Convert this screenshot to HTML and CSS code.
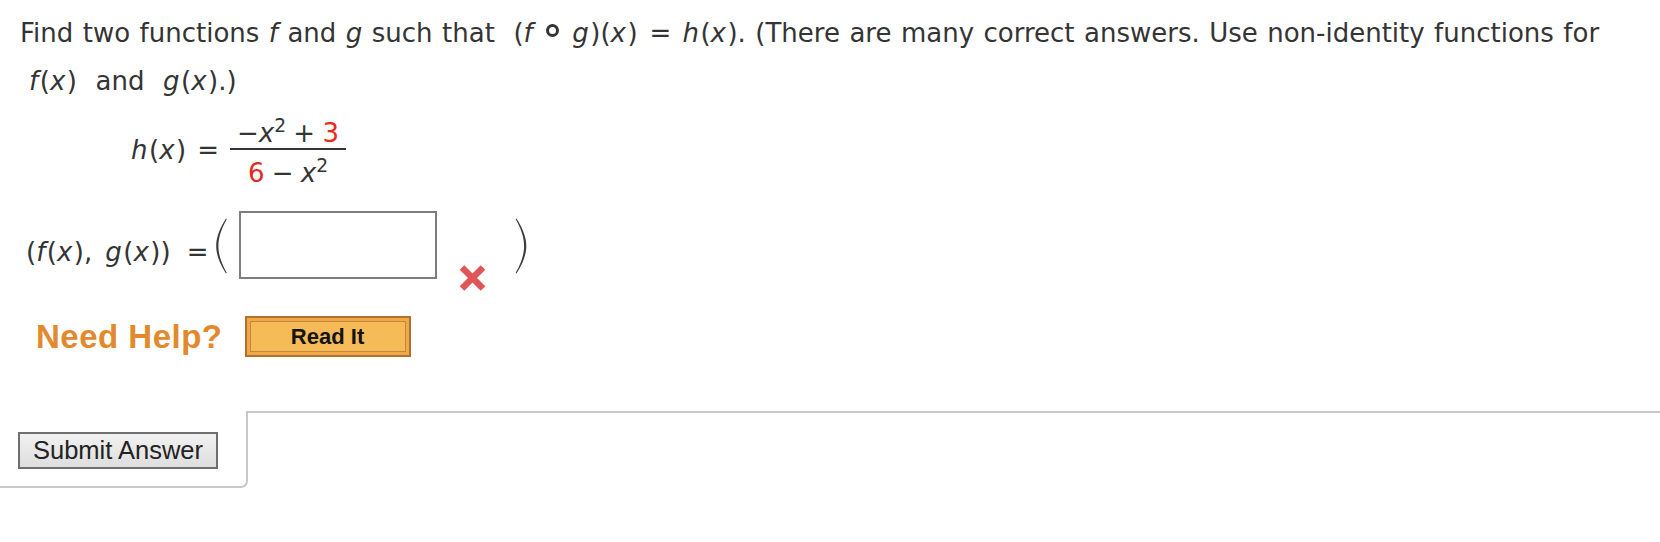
FILE: index.html
```html
<!DOCTYPE html>
<html>
<head>
<meta charset="utf-8">
<link rel="stylesheet" href="styles.css">
</head>
<body>
<div class="page">
  <p class="question">Find two functions <i>f</i> and <i>g</i> such that <span class="m">(<i>f</i><span class="ring" role="img" aria-label="∘"></span><i>g</i>)(<i>x</i>)<span class="op">=</span><i>h</i>(<i>x</i>)</span>. (There are many correct answers. Use non-identity functions for <span class="m pr"><i>f</i>(<i>x</i>)</span> and <span class="m"><i>g</i>(<i>x</i>)</span>.)</p>

  <div class="eq-row">
    <span class="eq-label"><i>h</i>(<i>x</i>)<span class="op">=</span></span>
    <span class="frac">
      <span class="num">−<i>x</i><sup>2</sup><span class="bin">+</span><span class="red">3</span></span>
      <span class="den"><span class="red">6</span><span class="bin">−</span><i>x</i><sup>2</sup></span>
    </span>
  </div>

  <div class="ans-row">
    <span class="ans-label">(<i>f</i>(<i>x</i>),<span class="thin"></span><i>g</i>(<i>x</i>))<span class="op">=</span></span>
    <svg class="paren paren-l" viewBox="0 0 12 56" width="12" height="56"><path d="M11 0.5 C3.5 12 1.2 21 1.2 28 C1.2 35 3.5 44 11 55.5 L11.8 54.8 C5.5 44 3.4 35 3.4 28 C3.4 21 5.5 12 11.8 1.2 Z"/></svg>
    <input class="answer-box" type="text" aria-label="answer">
    <svg class="wrong" viewBox="0 0 27 26" width="27" height="26"><path d="M3 2.5 L24 23.5 M24 2.5 L3 23.5"/></svg>
    <svg class="paren paren-r" viewBox="0 0 12 56" width="13" height="56"><path d="M1 0.5 C8.5 12 10.8 21 10.8 28 C10.8 35 8.5 44 1 55.5 L0.2 54.8 C6.5 44 8.6 35 8.6 28 C8.6 21 6.5 12 0.2 1.2 Z"/></svg>
  </div>

  <div class="help-row">
    <span class="need-help">Need Help?</span>
    <span class="read-it"><span class="read-it-inner">Read It</span></span>
  </div>

  <div class="submit-panel">
    <div class="submit-cell"><button class="submit-btn" type="button">Submit Answer</button></div>
    <div class="rest-cell"></div>
  </div>
</div>
</body>
</html>
```

FILE: styles.css
```css
html, body {
  margin: 0;
  padding: 0;
  background: #ffffff;
}

.page {
  font-family: "DejaVu Sans", Verdana, sans-serif;
  font-size: 26px;
  word-spacing: 1.2px;
  color: #343434;
}

i {
  font-style: italic;
}

.m i,
.eq-label i,
.ans-label i {
  margin-right: 1.5px;
}

.question {
  margin: 0;
  padding: 9px 30px 0 20px;
  line-height: 48px;
}

.m {
  padding-left: 0.35em;
  word-spacing: 0;
}

.m.pr {
  padding-right: 0.35em;
}

.ring {
  display: inline-block;
  box-sizing: border-box;
  width: 13px;
  height: 13px;
  margin: 0 13px 0 12px;
  border: 3px solid #343434;
  border-radius: 50%;
  vertical-align: 0.18em;
}

.op {
  margin: 0 11px 0 12px;
}

.bin {
  margin: 0 0.28em;
}

.thin {
  display: inline-block;
  width: 0.5em;
}

sup {
  font-size: 0.72em;
  line-height: 0;
  vertical-align: 0.55em;
}

.red {
  color: #e52a1d;
}

/* h(x) = fraction */
.eq-row {
  display: flex;
  align-items: center;
  padding: 13px 0 0 131px;
}

.eq-label {
  line-height: 30px;
  padding-bottom: 6px;
  white-space: pre;
}

.eq-label .op {
  margin: 0 0 0 11px;
}

.frac {
  display: inline-flex;
  flex-direction: column;
  align-items: center;
  margin-left: 11px;
}

.num {
  line-height: 30px;
  padding: 0 7px;
  border-bottom: 2px solid #343434;
  white-space: pre;
}

.den {
  line-height: 30px;
  padding-top: 8px;
  white-space: pre;
}

/* (f(x), g(x)) = ( [ ] x ) */
.ans-row {
  display: flex;
  align-items: flex-start;
  margin-top: 23px;
  padding-left: 26px;
  height: 80px;
}

.ans-label {
  line-height: 30px;
  margin-top: 26px;
  white-space: pre;
}

.ans-label .op {
  margin: 0 0 0 16px;
}

.paren {
  fill: #3c3c3c;
  margin-top: 7px;
}

.paren-l {
  margin-left: 7px;
}

.answer-box {
  box-sizing: border-box;
  width: 198px;
  height: 68px;
  margin: 0 0 0 12px;
  border: 2px solid #7d7d7d;
  background: #fff;
  padding: 0;
}

.wrong {
  margin: 54px 0 0 22px;
  stroke: #e05555;
  stroke-width: 6.5;
  fill: none;
}

.paren-r {
  margin-left: 29px;
}

/* Need Help row */
.help-row {
  display: flex;
  align-items: center;
  height: 41px;
  margin-top: 25px;
  padding-left: 36px;
}

.need-help {
  font-family: "Liberation Sans", Arial, sans-serif;
  font-weight: bold;
  font-size: 33px;
  letter-spacing: 0.5px;
  word-spacing: 0;
  line-height: 41px;
  color: #e3892d;
}

.read-it {
  box-sizing: border-box;
  display: flex;
  width: 166px;
  height: 41px;
  margin-left: 22px;
  border: 2px solid #b0722b;
  background: #f0a84a;
  padding: 3px;
}

.read-it-inner {
  flex: 1;
  display: flex;
  align-items: center;
  justify-content: center;
  border: 1px solid #c5873a;
  background: #f5bb58;
  font-family: "Liberation Sans", Arial, sans-serif;
  font-weight: bold;
  font-size: 22px;
  word-spacing: 0;
  color: #141414;
}

/* Submit panel */
.submit-panel {
  display: flex;
  margin-top: 54px;
}

.submit-cell {
  box-sizing: border-box;
  width: 248px;
  height: 77px;
  border-right: 2px solid #c9c9c9;
  border-bottom: 2px solid #c9c9c9;
  border-bottom-right-radius: 7px;
  padding: 21px 0 0 18px;
}

.rest-cell {
  flex: 1;
  border-top: 2px solid #c9c9c9;
}

.submit-btn {
  box-sizing: border-box;
  width: 200px;
  height: 37px;
  margin: 0;
  padding: 0;
  border: 2px solid #6f6f6f;
  border-radius: 0;
  background: linear-gradient(#f1f1f1, #dedede);
  font-family: "Liberation Sans", Arial, sans-serif;
  font-size: 25.5px;
  word-spacing: 0;
  color: #222;
  line-height: 33px;
}
```
